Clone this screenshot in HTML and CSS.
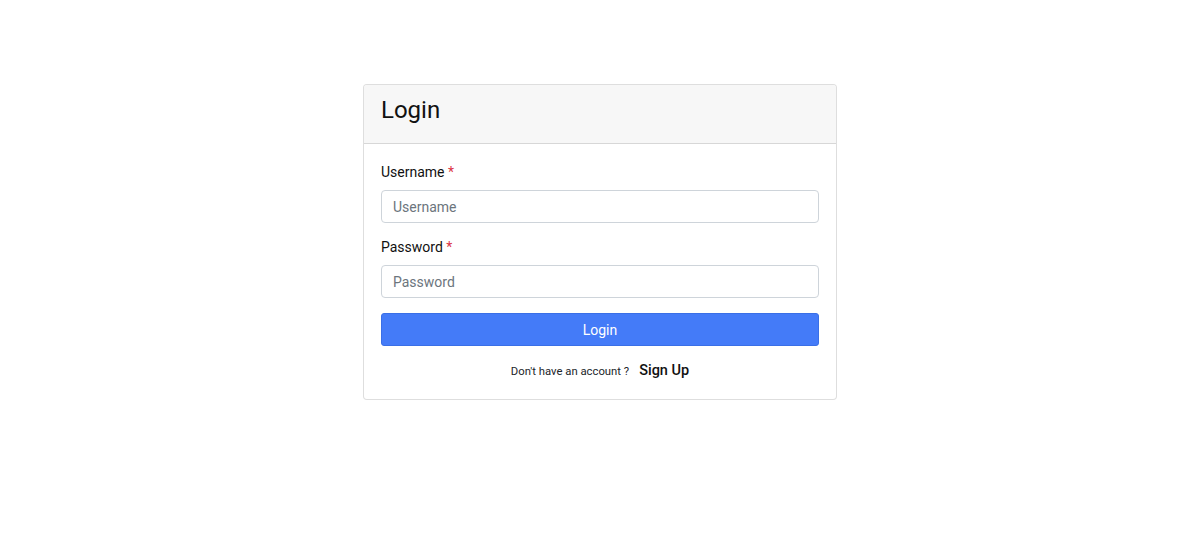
FILE: index.html
```html
<!DOCTYPE html>
<html lang="en">
<head>
<meta charset="utf-8">
<title>Login</title>
<link rel="stylesheet" href="styles.css">
</head>
<body>
<main class="page">
  <div class="card">
    <div class="card-header">
      <h3 class="title">Login</h3>
    </div>
    <form class="card-body">
      <div class="field">
        <label class="label" for="u">Username <span class="req">*</span></label>
        <input class="input" id="u" type="text" placeholder="Username">
      </div>
      <div class="field">
        <label class="label" for="p">Password <span class="req">*</span></label>
        <input class="input" id="p" type="password" placeholder="Password">
      </div>
      <button class="btn" type="button">Login</button>
      <div class="footer">
        <span class="small">Don't have an account ?</span>
        <a class="signup" href="#">Sign Up</a>
      </div>
    </form>
  </div>
</main>
</body>
</html>
```
FILE: styles.css
```css
* { box-sizing: border-box; }
html, body { margin: 0; padding: 0; background: #fff; }
body {
  font-family: Roboto, "Liberation Sans", sans-serif;
  color: #212529;
  font-size: 14px;
  line-height: 21px;
}
.page {
  display: flex;
  justify-content: center;
  padding-top: 84px;
}
.card {
  width: 474px;
  border: 1px solid rgba(0,0,0,0.13);
  border-radius: 4px;
  background: #fff;
}
.card-header {
  height: 59px;
  background: #f7f7f7;
  border-bottom: 1px solid rgba(0,0,0,0.13);
  padding: 10px 17px 0;
  border-radius: 3px 3px 0 0;
}
.title {
  margin: 0;
  font-size: 24px;
  font-weight: 400;
  line-height: 30px;
  color: #111;
}
.card-body {
  padding: 18px 17px 17px;
  display: flex;
  flex-direction: column;
}
.field {
  display: flex;
  flex-direction: column;
  gap: 7px;
  margin-bottom: 14px;
}
.field + .field { margin-bottom: 15px; }
.label { font-size: 14px; line-height: 21px; color: #111; }
.req { color: #dc3545; }
.input {
  height: 33px;
  border: 1px solid #ced4da;
  border-radius: 4px;
  padding: 0 11px;
  font-family: inherit;
  font-size: 14px;
  color: #495057;
  outline: none;
}
.input::placeholder { color: #6c757d; }
.btn {
  height: 33px;
  border: 1px solid #3a6fe6;
  background: #447bf8;
  color: #fff;
  border-radius: 3px;
  font-family: inherit;
  font-size: 14px;
}
.footer {
  margin-top: 14px;
  display: flex;
  justify-content: center;
  align-items: baseline;
  gap: 10px;
  line-height: 21px;
}
.small { font-size: 11.3px; color: #212529; }
.signup {
  font-size: 14.5px;
  font-weight: 500;
  color: #111;
  text-decoration: none;
}
```
